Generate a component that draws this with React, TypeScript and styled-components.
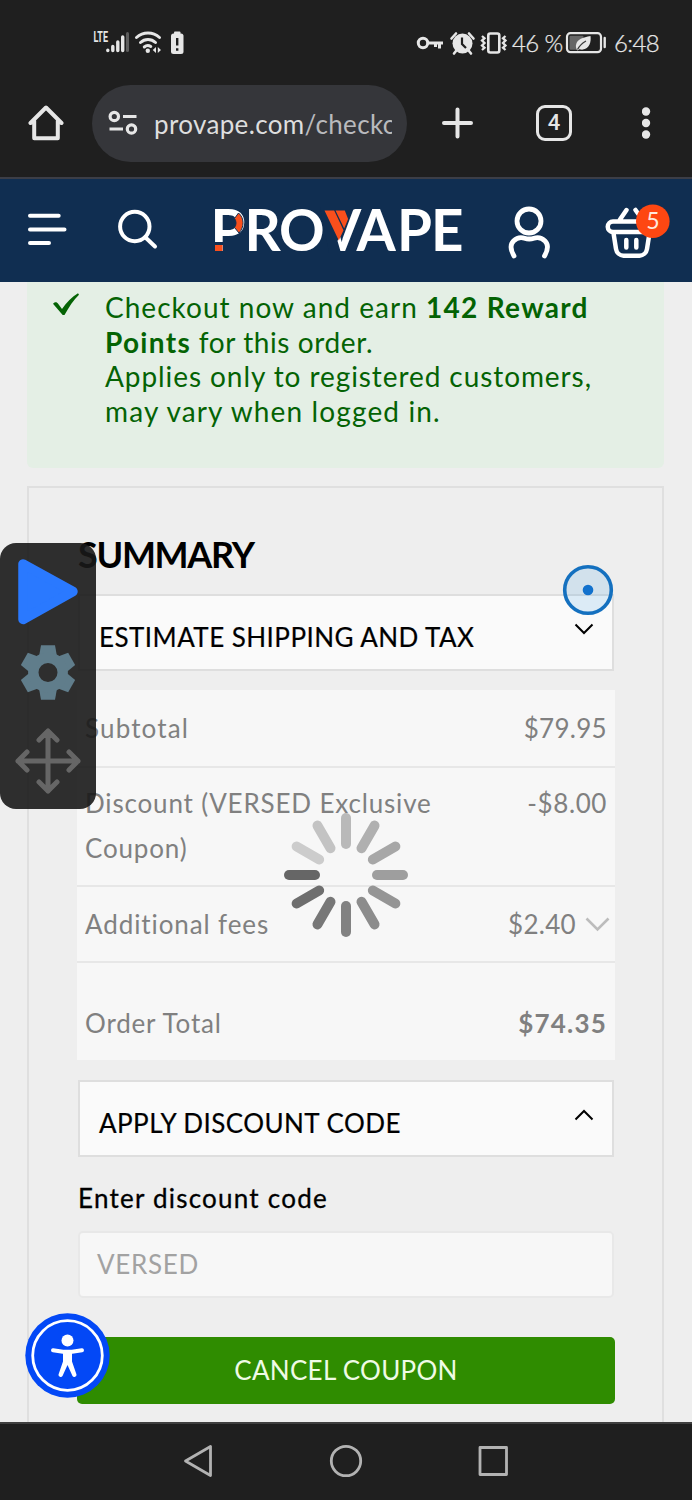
import React from 'react';
import styled, { createGlobalStyle } from 'styled-components';

const Global = createGlobalStyle`
  * { box-sizing: border-box; }
  body { margin: 0; background: #eee; }
`;

const Screen = styled.div`
  position: relative;
  display: flex;
  flex-direction: column;
  width: 692px;
  height: 1500px;
  overflow: hidden;
  background: #eeeeee;
  color: #000;
  font-family: Lato, 'Open Sans', sans-serif;
  svg { display: block; flex: none; }
`;

const StatusBar = styled.div`
  display: flex;
  align-items: center;
  height: 72px;
  padding: 14px 33px 0 90px;
  background: #1f1f1f;
  color: #e6e6e6;
`;
const Spacer = styled.div`flex: 1;`;
const StatusText = styled.span<{ $w: number; $ls: number; $pad?: number }>`
  width: ${p => p.$w}px;
  padding-left: ${p => p.$pad ?? 0}px;
  font-size: 24px;
  font-weight: 300;
  line-height: 30px;
  letter-spacing: ${p => p.$ls}px;
  white-space: nowrap;
  -webkit-text-stroke: 0.25px #e6e6e6;
`;

const BrowserBar = styled.div`
  display: flex;
  align-items: center;
  height: 107px;
  padding: 0 0 3px 28px;
  background: #1f1f1f;
  border-bottom: 2px solid #3c3e47;
`;
const UrlPill = styled.div`
  display: flex;
  align-items: center;
  width: 315px;
  height: 77px;
  margin: 0 33px 0 28px;
  padding-left: 16px;
  border-radius: 39px;
  background: #35363a;
`;
const Url = styled.div`
  width: 238px;
  margin-left: 16px;
  overflow: hidden;
  white-space: nowrap;
  font-size: 26px;
  line-height: 36px;
  letter-spacing: 0.35px;
  color: #dedede;
  padding-top: 2px;
`;
const UrlPath = styled.span`color: #b9babd;`;
const TabCount = styled.div`
  display: flex;
  align-items: center;
  justify-content: center;
  width: 36px;
  height: 36px;
  margin: 0 70px 0 62px;
  border: 3.5px solid #e6e6e6;
  border-radius: 9px;
  color: #e6e6e6;
  font: 500 22px/26px Roboto, sans-serif;
`;

const SiteHeader = styled.header`
  display: flex;
  align-items: center;
  height: 103px;
  padding-left: 27px;
  background: #102e51;
`;

const Content = styled.main`
  flex: 1;
  min-height: 0;
  overflow: hidden;
  padding: 0 28px 0 27px;
`;
const Notice = styled.section`
  display: flex;
  height: 186px;
  padding: 8px 0 0 25px;
  border-radius: 0 0 6px 6px;
  background: #e4efe5;
  color: #046304;
`;
const NoticeText = styled.div`
  margin: 0 0 0 25px;
  font-size: 28px;
  line-height: 34.6px;
  white-space: nowrap;
  b { letter-spacing: 1.3px; }
`;
const NoticeLine = styled.div<{ $ls: number }>`
  letter-spacing: ${p => p.$ls}px;
`;

const Panel = styled.section`
  height: 960px;
  margin-top: 18px;
  padding: 45px 48px 0 49px;
  border: 2px solid #dfdfdf;
`;
const Title = styled.h2`
  margin: 0;
  height: 61px;
  font-size: 36px;
  line-height: 42px;
  font-weight: 700;
  letter-spacing: -1.3px;
`;
const Accordion = styled.div<{ $gap: number }>`
  display: flex;
  justify-content: space-between;
  height: 77px;
  margin-bottom: ${p => p.$gap}px;
  padding: 0 18px 0 19px;
  border: 2px solid #dedede;
  background: #fafafa;
  span {
    padding-top: 24px;
    font-size: 26px;
    line-height: 34px;
    letter-spacing: 0.45px;
    white-space: nowrap;
    -webkit-text-stroke: 0.2px #000;
  }
  svg { margin-top: 27px; }
`;

const Totals = styled.div`
  margin: 0 -1px 20px -1px;
  background: #f7f7f7;
  color: #808080;
  font-size: 26px;
`;
const TotalRow = styled.div<{ $h: number; $top: number; $last?: boolean }>`
  display: flex;
  justify-content: space-between;
  height: ${p => p.$h}px;
  padding: ${p => p.$top}px 8px 0 8px;
  border-bottom: ${p => (p.$last ? '0' : '2px solid #e7e7e7')};
  line-height: 45px;
  svg { margin: 15px -3px 0 9px; }
`;
const RowLabel = styled.span<{ $ls?: number }>`
  width: 360px;
  letter-spacing: ${p => p.$ls ?? 0.83}px;
`;
const Amount = styled.span<{ $ls: number; $bold?: boolean }>`
  display: flex;
  letter-spacing: ${p => p.$ls}px;
  font-weight: ${p => (p.$bold ? 700 : 400)};
`;

const FieldLabel = styled.label`
  display: block;
  height: 52px;
  font-size: 26px;
  line-height: 38px;
  letter-spacing: 1.23px;
  -webkit-text-stroke: 0.3px #000;
`;
const Field = styled.div`
  height: 67px;
  margin-bottom: 39px;
  padding: 0 17px;
  border: 2px solid #e8e8e8;
  border-radius: 5px;
  background: #f7f7f7;
  color: #a2a2a2;
  font-size: 26px;
  line-height: 62px;
  letter-spacing: 0.7px;
`;
const CancelButton = styled.button`
  display: block;
  width: calc(100% + 2px);
  height: 67px;
  margin: 0 -1px;
  border: 0;
  padding: 0;
  border-radius: 5px;
  background: #2f8c00;
  color: #effbe6;
  font: 400 26px/65px Lato, sans-serif;
  letter-spacing: 0.3px;
`;

const NavBar = styled.nav`
  display: flex;
  align-items: center;
  justify-content: space-between;
  height: 78px;
  padding: 0 182px 2px;
  border-top: 2px solid #3f3f3f;
  background: #1f1f1f;
`;

const FloatingTools = styled.div`
  position: absolute;
  left: 0;
  top: 543px;
  width: 96px;
  height: 266px;
  border-radius: 16px;
  background: rgba(24, 24, 24, 0.9);
`;
const Floating = styled.div<{ $x: number; $y: number }>`
  position: absolute;
  left: ${p => p.$x}px;
  top: ${p => p.$y}px;
`;

const ink = '#e6e6e6';

const NetworkIcons = () => (
  <svg width="100" height="30" viewBox="90 28 100 30">
    <text x="93.5" y="41.5" fill={ink} fontFamily="Roboto, sans-serif" fontWeight="700" fontSize="14" textLength="14.5" lengthAdjust="spacingAndGlyphs">LTE</text>
    <g strokeWidth="3.4" strokeLinecap="round" stroke={ink}>
      <path d="M107.8 50.2v.3M112.8 46.5v4M117.8 42v8.500M122.700 37v13.500" />
      <path d="M127.500 33.500v17" stroke="#5d5d5d" strokeWidth="3" />
    </g>
    <g fill="none" stroke={ink} strokeWidth="3" strokeLinecap="round">
      <path d="M136.500 37.500a17 17 0 0 1 23 0M140.500 42.500a11 11 0 0 1 15 0M144.300 47a5.500 5.500 0 0 1 6.500-.5" />
    </g>
    <circle cx="147.800" cy="50.800" r="2.200" fill={ink} />
    <path d="M156 47v6l-3.200-3zM157.800 47v6l3.200-3z" fill={ink} />
    <rect x="171" y="33.500" width="12.500" height="20.500" rx="2.500" fill={ink} />
    <rect x="174" y="31.500" width="6.500" height="3" rx="1" fill={ink} />
    <path d="M177.200 38v7.500M177.200 48.200v2.500" stroke="#1f1f1f" strokeWidth="2.400" />
  </svg>
);

const ModeIcons = () => (
  <svg width="96" height="30" viewBox="415 28 96 30">
    <g fill="none" stroke={ink}>
      <circle cx="423" cy="43" r="4.700" strokeWidth="3" />
      <path d="M428 43h15M439.500 43v5.500M435.500 43v4" strokeWidth="3" />
    </g>
    <circle cx="462.500" cy="43.500" r="10" fill={ink} />
    <path d="M451.500 38.500l4.500-5M473.500 38.500l-4.500-5M456 51l-2 2.500M469 51l2 2.500" stroke={ink} strokeWidth="2.600" strokeLinecap="round" />
    <path d="M462 37.500v6.500l4 4" fill="none" stroke="#1f1f1f" strokeWidth="2.200" />
    <rect x="488.300" y="33.500" width="11" height="19" rx="2" fill="none" stroke={ink} strokeWidth="2.600" />
    <path d="M482 36l2.500 2.200-2.500 2.400 2.500 2.400-2.500 2.400 2.500 2.400-2.500 2.200M505.500 36l-2.500 2.200 2.500 2.400-2.500 2.400 2.500 2.400-2.500 2.400 2.500 2.200" fill="none" stroke={ink} strokeWidth="2.300" />
  </svg>
);

const BatteryIcon = () => (
  <svg width="42" height="26" viewBox="565 30 42 26">
    <rect x="567" y="33.200" width="34" height="19" rx="3.500" fill="none" stroke={ink} strokeWidth="2.200" />
    <rect x="569.500" y="35.700" width="14" height="14" rx="1" fill="#666" />
    <path d="M577 50c0 0-1.500-3-1-5 1-6 7-7.500 14.500-9 .8 6-1 13-8 13.500-1.500.1-2.500-.3-3-.8L577.800 50.500z" fill={ink} />
    <path d="M577.500 49.500c2-4 5-6.500 8.500-8.500" fill="none" stroke="#3a3a3a" strokeWidth="1.200" />
    <path d="M604.700 38v9" stroke={ink} strokeWidth="2.400" strokeLinecap="round" />
  </svg>
);

const HomeIcon = () => (
  <svg width="36" height="36" viewBox="28 105 36 36" fill="none" stroke={ink} strokeWidth="4" strokeLinejoin="round" strokeLinecap="round">
    <path d="M30.500 123L46 107.500 61.500 123M34.200 121v17.200h23.600V121" />
  </svg>
);

const TuneIcon = () => (
  <svg width="30" height="28" viewBox="108 109 30 28" fill="none" stroke={ink} strokeWidth="3.200">
    <circle cx="114.300" cy="116.500" r="4.200" />
    <circle cx="131.500" cy="129" r="4.200" />
    <path d="M123 116.500h13.500M109.500 129H123" />
  </svg>
);

const Logo = () => (
  <svg width="252" height="76" viewBox="212 192 252 76">
    <g fill="#fff" fontFamily="Lato, sans-serif" fontWeight="700" fontSize="56.500">
      <text x="210.500" y="250">P</text>
      <text x="244.500" y="250">R</text>
      <text x="279" y="250">O</text>
      <text x="322" y="250">V</text>
      <text x="356.500" y="250">A</text>
      <text x="397" y="250">P</text>
      <text x="431" y="250">E</text>
    </g>
    <path d="M320 206h30.500L337.500 240l3.500 12h-12z" fill="#102e51" />
    <path d="M324.500 209.500h9.700l9.300 19.800-4.700 10.200zM335.500 209.500h9.300l3.300 8.500-3.900 9.500z" fill="#f94f1c" />
    <path d="M212 241h14v3h-14z" fill="#102e51" />
    <path d="M215 244h7.500v6H215z" fill="#f94f1c" />
    <path d="M238.500 212c6 5 6 14 .5 20l-4.500-5.500c2-2.500 2-6.500 0-9z" fill="#f94f1c" stroke="#102e51" strokeWidth="1" />
  </svg>
);

const CartIcon = () => (
  <svg width="68" height="60" viewBox="604 200 68 60">
    <g fill="none" stroke="#fff" strokeWidth="4.500" strokeLinecap="round" strokeLinejoin="round">
      <path d="M620 218.500l6.500-9.500M635.500 209l7.500 10.500M613 220.500h38a4.500 4.500 0 0 1 0 10.500h-38a4.500 4.500 0 0 1 0-10.500zM613.500 232l2.500 16a8 8 0 0 0 7.500 6.700h16a8 8 0 0 0 7.500-6.700l2.500-16M626.300 239v7.500M636.300 239v7.500" />
    </g>
    <circle cx="652.800" cy="220.200" r="16.800" fill="#fe4712" />
    <text x="652.800" y="228" textAnchor="middle" fill="#ffe9dd" fontFamily="Lato, sans-serif" fontSize="23">5</text>
  </svg>
);

const shades = ['#b9b9b9', '#b0b0b0', '#a7a7a7', '#9e9e9e', '#959595', '#8c8c8c', '#828282', '#777777', '#6e6e6e', '#666666', '#cccccc', '#c3c3c3'];

export default function App() {
  return (
    <Screen>
      <Global />
      <StatusBar>
        <NetworkIcons />
        <Spacer />
        <ModeIcons />
        <StatusText $w={54} $ls={-0.6} $pad={1}>46 %</StatusText>
        <BatteryIcon />
        <StatusText $w={52} $ls={-0.6} $pad={7}>6:48</StatusText>
      </StatusBar>
      <BrowserBar>
        <HomeIcon />
        <UrlPill>
          <TuneIcon />
          <Url>provape.com<UrlPath>/checkout</UrlPath></Url>
        </UrlPill>
        <svg width="34" height="32" viewBox="0 0 34 32" stroke={ink} strokeWidth="4" strokeLinecap="round">
          <path d="M17.500 2.500v27M4 16h27" />
        </svg>
        <TabCount>4</TabCount>
        <svg width="10" height="34" viewBox="0 0 10 34" fill={ink}>
          <circle cx="4" cy="5.500" r="4.200" /><circle cx="4" cy="17" r="4.200" /><circle cx="4" cy="28.500" r="4.200" />
        </svg>
      </BrowserBar>
      <SiteHeader>
        <svg width="185" height="56" viewBox="27 202 185 56" fill="none" stroke="#fff" strokeWidth="4" strokeLinecap="round">
          <path d="M30 214.700h28.700M30 228.500h34.500M30 242h19" />
          <circle cx="134.800" cy="225.500" r="14.700" />
          <path d="M145.500 236.500l9.500 9" />
        </svg>
        <Logo />
        <svg width="140" height="60" viewBox="464 200 140 60" fill="none" stroke="#fff" strokeWidth="4.800" strokeLinecap="round">
          <circle cx="529" cy="220" r="12" />
          <path d="M514 255c-4-7-3.500-12-.5-15 4-4 8-3.800 11-2.800 3.500 1.200 6 1.200 9.500 0 3-1 7-1.200 11 2.800 3 3 3.500 8-.500 15" />
        </svg>
        <CartIcon />
      </SiteHeader>
      <Content>
        <Notice>
          <svg width="28" height="26" viewBox="52 290 28 26" fill="#046304">
            <path d="M53 303.800c1.300-1.800 3.800-2.300 5.300.2l3.700 5c4.500-7 10-12 16-15.800l1 1.500c-5.500 5.500-10 12-14.500 20.300h-1.800z" />
          </svg>
          <NoticeText>
            <NoticeLine $ls={1.02}>Checkout now and earn <b>142 Reward</b></NoticeLine>
            <NoticeLine $ls={0.6}><b>Points</b> for this order.</NoticeLine>
            <NoticeLine $ls={0.92}>Applies only to registered customers,</NoticeLine>
            <NoticeLine $ls={1.14}>may vary when logged in.</NoticeLine>
          </NoticeText>
        </Notice>
        <Panel>
          <Title>SUMMARY</Title>
          <Accordion $gap={19}>
            <span>ESTIMATE SHIPPING AND TAX</span>
            <svg width="20" height="12" viewBox="0 0 20 12" fill="none" stroke="#000" strokeWidth="2"><path d="M1.500 1.500L10 10l8.500-8.500" /></svg>
          </Accordion>
          <Totals>
            <TotalRow $h={78} $top={16}><RowLabel $ls={1.15}>Subtotal</RowLabel><Amount $ls={0.3}>$79.95</Amount></TotalRow>
            <TotalRow $h={119} $top={13}><RowLabel>Discount (VERSED Exclusive Coupon)</RowLabel><Amount $ls={0.6}>-$8.00</Amount></TotalRow>
            <TotalRow $h={76} $top={15}>
              <RowLabel $ls={0.9}>Additional fees</RowLabel>
              <Amount $ls={0.3}>
                $2.40
                <svg width="25" height="15" viewBox="0 0 25 15" fill="none" stroke="#bcbcbc" strokeWidth="2.600"><path d="M1.500 1.500l11 11 11-11" /></svg>
              </Amount>
            </TotalRow>
            <TotalRow $h={97} $top={38} $last><RowLabel>Order Total</RowLabel><Amount $ls={1.2} $bold>$74.35</Amount></TotalRow>
          </Totals>
          <Accordion $gap={22}>
            <span>APPLY DISCOUNT CODE</span>
            <svg width="20" height="12" viewBox="0 0 20 12" fill="none" stroke="#000" strokeWidth="2"><path d="M1.500 10.500L10 2l8.500 8.500" /></svg>
          </Accordion>
          <FieldLabel>Enter discount code</FieldLabel>
          <Field>VERSED</Field>
          <CancelButton>CANCEL COUPON</CancelButton>
        </Panel>
      </Content>
      <NavBar>
        <svg width="32" height="34" viewBox="182 1444 32 34" fill="none" stroke="#b2b2b2" strokeWidth="2.800" strokeLinejoin="round"><path d="M185.500 1461l25-14.500v29z" /></svg>
        <svg width="34" height="34" viewBox="0 0 34 34" fill="none" stroke="#b2b2b2" strokeWidth="2.800"><circle cx="17" cy="17" r="14.700" /></svg>
        <svg width="32" height="34" viewBox="0 0 32 34" fill="none" stroke="#b2b2b2" strokeWidth="2.800" strokeLinejoin="round"><rect x="2" y="3.500" width="26.500" height="27" /></svg>
      </NavBar>

      <Floating $x={281} $y={810}>
        <svg width="130" height="130" viewBox="-65 -65 130 130" strokeWidth="10" strokeLinecap="round">
          {shades.map((c, i) => <path key={c} d="M0-57V-31" stroke={c} transform={`rotate(${i * 30})`} />)}
        </svg>
      </Floating>
      <Floating $x={562} $y={564}>
        <svg width="52" height="52" viewBox="-26 -26 52 52">
          <circle r="23.300" fill="rgba(40,150,230,.14)" stroke="#1470bf" strokeWidth="3.600" />
          <circle r="5.300" fill="#1271cd" />
        </svg>
      </Floating>
      <FloatingTools>
        <svg width="96" height="266" viewBox="0 543 96 266">
          <path d="M23 564v55.500L73 591.500z" fill="#2a79ff" stroke="#2a79ff" strokeWidth="9.500" strokeLinejoin="round" />
          <g transform="translate(48 672.500)" fill="#607d8b">
            {[0, 60, 120, 180, 240, 300].map(a => <path key={a} d="M-9-16L-7-27.300H7L9-16z" transform={`rotate(${a})`} />)}
            <circle r="14.700" fill="none" stroke="#607d8b" strokeWidth="10.400" />
          </g>
          <g fill="none" stroke="#666" strokeWidth="5" strokeLinecap="round" strokeLinejoin="round">
            <path d="M48 731v60M18 761h60M39 740l9-9 9 9M39 782l9 9 9-9M27 752l-9 9 9 9M69 752l9 9-9 9" />
          </g>
        </svg>
      </FloatingTools>
      <Floating $x={24.5} $y={1313}>
        <svg width="85" height="85" viewBox="-42.500 -42.500 85 85">
          <circle r="42.200" fill="#0348f6" />
          <circle r="34.800" fill="none" stroke="#fff" strokeWidth="2.800" />
          <circle cy="-15" r="6" fill="#fff" />
          <path d="M-14.500-5.300l10 1.500h9l10-1.500" fill="none" stroke="#fff" strokeWidth="4" strokeLinecap="round" strokeLinejoin="round" />
          <path d="M-4.500-4.500h9V6L9 19a2.200 2.200 0 0 1-4 1.500L0 9.500-5 20.500A2.200 2.200 0 0 1-9 19L-4.500 6z" fill="#fff" />
        </svg>
      </Floating>
    </Screen>
  );
}
